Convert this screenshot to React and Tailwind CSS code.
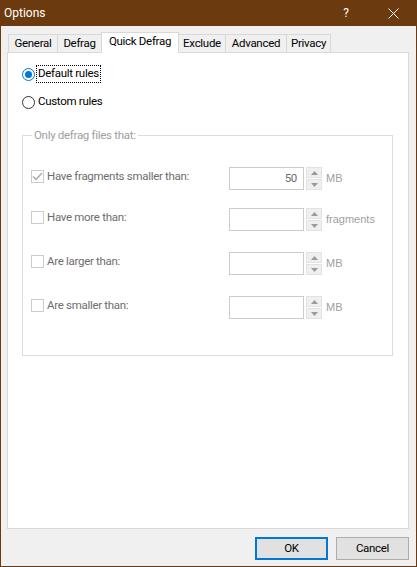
import React from 'react';

const ui = { fontFamily: 'Roboto, "Noto Sans", sans-serif' };
const pix = { fontFamily: '"Liberation Sans", Arial, sans-serif' };

const tabs = [
  { name: 'General', w: 'w-[49px]' },
  { name: 'Defrag', w: 'w-[44px]' },
  { name: 'Quick Defrag', w: 'w-[78px]', active: true },
  { name: 'Exclude', w: 'w-[46px]', afterActive: true },
  { name: 'Advanced', w: 'w-[61px]' },
  { name: 'Privacy', w: 'w-[45px]', last: true },
];

const rules = [
  { label: 'Have fragments smaller than:', value: '50', unit: 'MB', checked: true, mt: 'mt-[31px]' },
  { label: 'Have more than:', value: '', unit: 'fragments', mt: 'mt-[18px]' },
  { label: 'Are larger than:', value: '', unit: 'MB', mt: 'mt-[21px]' },
  { label: 'Are smaller than:', value: '', unit: 'MB', mt: 'mt-[21px]' },
];

const Spinner = () => (
  <div className="ml-[2px] flex flex-col gap-[1px] w-[16px] h-[23px]">
    {[0, 1].map((i) => (
      <div key={i} className="h-[11px] bg-[#efefef] border border-[#e2e2e2] flex items-center justify-center">
        <svg width="7" height="4" viewBox="0 0 7 4">
          {i === 0 ? <path d="M3.5 0 L7 4 L0 4 Z" fill="#9a9a9a" /> : <path d="M0 0 L7 0 L3.5 4 Z" fill="#9a9a9a" />}
        </svg>
      </div>
    ))}
  </div>
);

const Radio = ({ checked }) => (
  <div className={`w-[13px] h-[13px] rounded-full border flex items-center justify-center bg-white ${checked ? 'border-[#0078d7]' : 'border-[#333333]'}`}>
    {checked && <div className="w-[7px] h-[7px] rounded-full bg-[#0078d7]" />}
  </div>
);

export default function App() {
  return (
    <div className="w-[417px] h-[567px] flex flex-col bg-[#6b3a0e] text-[11.5px] tracking-[-0.3px]" style={ui}>
      {/* title bar */}
      <div className="h-[26px] flex items-center text-white shrink-0 text-[12px] tracking-normal">
        <span className="ml-[4px] leading-none">Options</span>
        <span className="ml-auto mr-[39px] leading-none">?</span>
        <svg className="mr-[18px]" width="11" height="11" viewBox="0 0 11 11">
          <path d="M0.5 0.5 L10.5 10.5 M10.5 0.5 L0.5 10.5" stroke="white" strokeWidth="1" />
        </svg>
      </div>

      <div className="flex-1 mx-[1px] mb-[1px] bg-[#f0f0f0] pl-[6px] pr-[7px] flex flex-col">
        {/* tabs */}
        <div className="mt-[6px] h-[20px] flex items-end pl-[1px] text-[#000000]">
          {tabs.map((t) =>
            t.active ? (
              <div key={t.name} className={`${t.w} h-[21px] -mb-[1px] relative z-10 bg-white border border-b-0 border-[#d9d9d9] flex items-center justify-center pb-[2px]`}>
                {t.name}
              </div>
            ) : (
              <div
                key={t.name}
                className={`${t.w} h-[18px] bg-[#f0f0f0] border-t border-[#d9d9d9] ${t.afterActive ? '' : 'border-l'} ${t.last ? 'border-r' : ''} flex items-center justify-center`}
              >
                {t.name}
              </div>
            )
          )}
        </div>

        {/* panel */}
        <div className="w-[402px] h-[477px] bg-white border border-[#d9d9d9] flex flex-col">
          <div className="mt-[13px] ml-[14px] h-[16px] flex items-center">
            <Radio checked />
            <span className="ml-[1px] px-[1px] h-[18px] flex items-center border border-dotted border-black leading-none">Default rules</span>
          </div>
          <div className="mt-[12px] ml-[14px] h-[16px] flex items-center">
            <Radio />
            <span className="ml-[2px] px-[1px] leading-none">Custom rules</span>
          </div>

          <div className="mt-[25px] ml-[14px] w-[371px] h-[221px] border border-[#dcdcdc] relative flex flex-col">
            <span className="absolute -top-[9px] left-[9px] bg-white px-[2px] text-[#a0a0a0] leading-[16px]">Only defrag files that:</span>
            {rules.map((r) => (
              <div key={r.label} className={`${r.mt} flex items-start`}>
                <div className="w-[206px] pl-[8px] mt-[3px] h-[13px] flex items-center">
                  <div className="w-[13px] h-[13px] border border-[#cccccc] bg-white flex items-center justify-center">
                    {r.checked && (
                      <svg width="11" height="9" viewBox="0 0 11 9">
                        <path d="M1 4.5 L4 7.5 L10 1" stroke="#a8a8a8" strokeWidth="1.4" fill="none" />
                      </svg>
                    )}
                  </div>
                  <span className="ml-[3px] text-[#6d6d6d] leading-none whitespace-nowrap">{r.label}</span>
                </div>
                <div className="w-[75px] h-[23px] border border-[#cccccc] bg-white flex items-center justify-end pr-[6px] text-[#6d6d6d]">
                  {r.value}
                </div>
                <Spinner />
                <span className="ml-[4px] h-[23px] flex items-center text-[11px] tracking-normal text-[#a0a0a0]" style={pix}>
                  {r.unit}
                </span>
              </div>
            ))}
          </div>
        </div>

        {/* buttons */}
        <div className="mt-[8px] flex justify-end gap-[8px]">
          <button className="w-[73px] h-[23px] bg-[#e1e1e1] border-2 border-[#0078d7] text-black leading-none">OK</button>
          <button className="w-[73px] h-[23px] bg-[#e1e1e1] border border-[#adadad] text-black leading-none">Cancel</button>
        </div>
      </div>
    </div>
  );
}
